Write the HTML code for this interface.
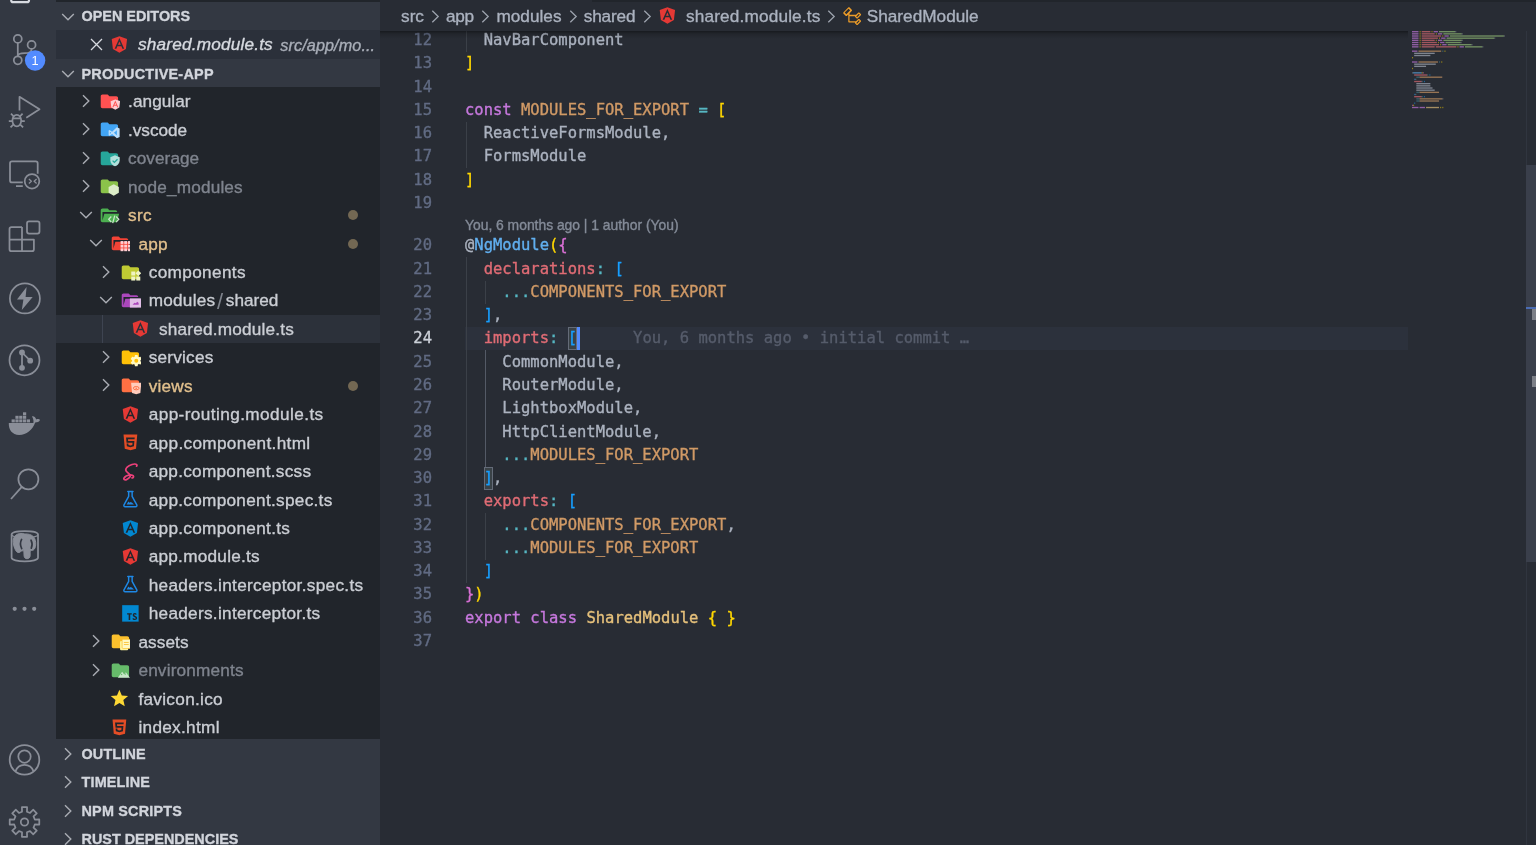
<!DOCTYPE html>
<html lang="en"><head><meta charset="utf-8"><title>shared.module.ts - productive-app</title>
<style>
*{box-sizing:border-box;margin:0;padding:0}
html,body{width:1536px;height:845px;overflow:hidden;background:#282c34}
body{position:relative;will-change:transform;-webkit-text-stroke:.35px;font-family:"Liberation Sans",sans-serif;color:#ccd0d8}
.abs{position:absolute}
.activity{position:absolute;left:0;top:0;width:56px;height:845px;background:#333842}
.activity svg{position:absolute;overflow:visible}
.sidebar{position:absolute;left:56px;top:0;width:324px;height:845px;background:#21252b;overflow:hidden}
.hdr{position:absolute;left:0;width:324px;height:28.45px;background:#333842}
.hdr svg{position:absolute;left:5.4px;top:8px}
.ht{position:absolute;left:25.5px;color:#d2d5dc;font-weight:bold;font-size:14.4px;line-height:28px;white-space:pre}
.row{position:absolute;left:0;width:324px;height:28.45px}
.row svg{position:absolute}
.row.sel{background:#2c313a}
.t{position:absolute;font-size:17.2px;line-height:28px;white-space:pre;color:#cbced4}
.mod{color:#e2c08d}
.ign{color:#7f848e}
.dot{position:absolute;left:291.5px;top:9.2px;width:10px;height:10px;border-radius:50%;background:#736853}
.editor{position:absolute;left:380px;top:0;width:1156px;height:845px;background:#282c34;overflow:hidden}
.crumbs{position:absolute;left:0;top:0;width:1156px;height:30.5px;background:#282c34;z-index:5}
.crumbs span{position:absolute;font-size:17.2px;line-height:28px;color:#abb2bf;white-space:pre}
.crumbs svg{position:absolute}
.ln{position:absolute;left:0;width:52px;text-align:right;font-family:"DejaVu Sans Mono","Liberation Mono",monospace;font-size:15.51px;line-height:24px;height:24px;color:#616b83;white-space:pre}
.ln.act{color:#ccd0d8}
.cl{position:absolute;left:85px;font-family:"DejaVu Sans Mono","Liberation Mono",monospace;font-size:15.51px;line-height:24px;height:24px;color:#abb2bf;white-space:pre}
.k{color:#c678dd}.c{color:#d19a66}.o{color:#56b6c2}.v{color:#e06c75}.f{color:#61afef}.y{color:#e5c07b}
.b1{color:#ffd700}.b2{color:#da70d6}.b3{color:#179fff}
.lens{position:absolute;left:85px;font-size:13.9px;line-height:20px;color:#848b98;white-space:pre}
.blame{color:#565c6b}
.g{position:absolute;width:1px;background:#3b4048}
.g.a{background:#545a66}
</style></head>
<body>
<div class="activity">
<svg width="56" height="845" viewBox="0 0 56 845" style="left:0;top:0" fill="none" stroke="#8a8e98" stroke-width="1.75" stroke-linejoin="round">
<path d="M11.200 -3V.200c0 1.100.900 2 2 2h13.800c1.100 0 2-.900 2-2V-3" stroke="#d7dae0" stroke-width="2.200"/>
<g>
<circle cx="17.800" cy="38.900" r="4"/><circle cx="31.600" cy="44.900" r="4"/><circle cx="17.800" cy="60.300" r="4"/>
<path d="M17.800 42.900V56.300M31.600 48.900c0 3.400-3.200 4.300-6.600 4.300-4.200 0-7.200.800-7.200 3.100"/>
<circle cx="35.100" cy="60.500" r="10.200" fill="#528bff" stroke="none"/>
<text x="35.100" y="64.900" text-anchor="middle" font-family="Liberation Sans, sans-serif" font-size="12.800" font-weight="normal" fill="#ffffff" stroke="none">1</text>
</g>
<g>
<path d="M19.500 110.500V96.800L39.500 109.300 26.300 117.700"/>
<ellipse cx="16.800" cy="120.600" rx="4.400" ry="5.800"/>
<path d="M12.600 118.400h8.400M13.600 116.300l-2.600-2.600M20 116.300l2.600-2.600M12.400 121h-3.600M21.200 121h3.600M13.300 124.600l-2.800 2.800M20.300 124.600l2.800 2.800"/>
</g>
<g>
<path d="M22.800 182.400H12c-1.100 0-2-.900-2-2v-17c0-1.100.900-2 2-2h23.700c1.100 0 2 .900 2 2v10.400M16 186h6.800"/>
<circle cx="32" cy="181.300" r="7.300"/>
<path d="M28.900 179l2.500 2.300-2.500 2.300M36.600 179l-2.500 2.300 2.500 2.300" stroke-width="1.300"/>
</g>
<g>
<rect x="27" y="221.400" width="12.500" height="12.200" rx="2"/>
<path d="M22 227H11.500c-1.100 0-2 .900-2 2v20.200c0 1.100.900 2 2 2h20.400c1.100 0 2-.900 2-2v-9.600H9.500M22 227v24.200"/>
</g>
<g>
<circle cx="24.900" cy="298.400" r="15"/>
<path d="M26.600 287l-9.600 12.400h6.400l-1.600 10.600 10.900-12.900h-7.100z" fill="#8a8e98" stroke="none"/>
</g>
<g>
<circle cx="24.500" cy="360.300" r="15"/>
<path d="M22 352.500v15.300M22 352.500l8.200 8.200"/>
<circle cx="22" cy="352.500" r="2.900" fill="#8a8e98" stroke="none"/><circle cx="30.200" cy="360.700" r="2.900" fill="#8a8e98" stroke="none"/><circle cx="22" cy="367.800" r="2.900" fill="#8a8e98" stroke="none"/>
</g>
<g fill="#8a8e98" stroke="none">
<path d="M8.800 423h24.600c.600-3.200-.800-5.400-1.400-6.400 1.200-.900 3.400.400 4.200 2.800 1.400-.600 3.200-.300 3.800.600-.800 1.800-2.800 2.500-4.800 2.500-2.800 7.800-8.800 12.400-15.900 12.400-7.400 0-10.700-5.300-10.500-11.900z"/>
<rect x="11.600" y="419.400" width="3.200" height="3" /><rect x="15.400" y="419.400" width="3.200" height="3"/><rect x="19.200" y="419.400" width="3.200" height="3"/><rect x="23" y="419.400" width="3.200" height="3"/><rect x="26.800" y="419.400" width="3.200" height="3"/>
<rect x="15.400" y="415.800" width="3.200" height="3"/><rect x="19.200" y="415.800" width="3.200" height="3"/><rect x="23" y="415.800" width="3.200" height="3"/>
<rect x="23" y="412.300" width="3.200" height="3"/>
</g>
<g>
<circle cx="28.400" cy="479.300" r="10"/>
<path d="M21.800 486.800L11 499"/>
</g>
<g>
<path d="M11.600 534.400c0-2 5.800-3.400 13.200-3.400s13.200 1.400 13.200 3.400v23.400c0 2-5.800 3.600-13.200 3.600s-13.200-1.600-13.200-3.600z"/>
<path d="M11.600 534.400c0 1.900 5.800 3.200 13.200 3.200s13.200-1.300 13.200-3.200" stroke-width="1.200"/>
<path fill="#8a8e98" stroke="#8a8e98" stroke-width="1" d="M24.900 534c-3.600-.900-7.400-.600-9.600 1.600-1.900 2-2.400 4.400-2 7.200.300 2.300.700 4.200 1.600 6 .800 1.700 1.700 3.500 3.200 3.700 1.400.200 2.400-.500 3.200-1.500.800.200 1.700-.200 2.400-1.200.300 2 .200 4.200.400 6.200.200 1.700 1.300 2.700 2.900 2.700 1.700 0 3-1.100 3.100-2.800.200-2-.200-4.100.200-6 .900.600 2 .700 3 .200 1.400-1 2.300-3.100 2.400-5.200.200-2.800-.300-5.800-2.100-8-2.200-2.400-5.500-3.200-8.700-2.900z"/>
<path d="M21.600 539.400c-1.400 2.600-1.300 6.400.100 9.200M31 540.200c1.200 2.200 1.400 5.400.300 8" stroke="#333842" stroke-width="1.700" stroke-linecap="round"/>
</g>
<g fill="#8a8e98" stroke="none"><circle cx="14.700" cy="608.800" r="2.100"/><circle cx="24.500" cy="608.800" r="2.100"/><circle cx="34.200" cy="608.800" r="2.100"/></g>
<g>
<circle cx="24.500" cy="759.900" r="14.800"/>
<circle cx="24.500" cy="756.600" r="6.200"/>
<path d="M15.400 771.400c1.400-4 4.800-6.600 9.100-6.600s7.700 2.600 9.100 6.600"/>
</g>
<g>
<path d="M22.03 811.69 L21.92 807.22 L27.08 807.22 L26.97 811.69 L30.04 812.96 L33.13 809.73 L36.77 813.37 L33.54 816.46 L34.81 819.53 L39.28 819.42 L39.28 824.58 L34.81 824.47 L33.54 827.54 L36.77 830.63 L33.13 834.27 L30.04 831.04 L26.97 832.31 L27.08 836.78 L21.92 836.78 L22.03 832.31 L18.96 831.04 L15.87 834.27 L12.23 830.63 L15.46 827.54 L14.19 824.47 L9.72 824.58 L9.72 819.42 L14.19 819.53 L15.46 816.46 L12.23 813.37 L15.87 809.73 L18.96 812.96Z"/>
<circle cx="24.500" cy="822" r="3.700"/>
</g>
</svg>
</div>
<div class="sidebar">
<div class="hdr" style="top:2px"><svg width="14" height="14" viewBox="0 0 14 14"><path d="M1.2 4 L7 9.8 L12.8 4" fill="none" stroke="#a9acb3" stroke-width="1.4"/></svg></div><span class="ht" style="top:2px;letter-spacing:0.009px">OPEN EDITORS</span>
<div class="row" style="top:30.4px;height:28.7px;background:#2b303a"><svg style="left:34.200px;top:8px" width="13" height="13" viewBox="0 0 13 13"><path d="M1 1l11 11M12 1L1 12" stroke="#d7dae0" stroke-width="1.300" fill="none"/></svg><svg style="left:53.3px;top:3.6px" width="20.8" height="20.8" viewBox="0 0 24 24"><path fill="#e53935" fill-rule="evenodd" d="M12 2.5l8.84 3.15-1.34 11.7L12 21.5l-7.5-4.15-1.34-11.7L12 2.5m0 2.1L6.47 17h2.06l1.11-2.78h4.7L15.45 17h2.06L12 4.6m1.62 7.9h-3.23L12 8.63l1.62 3.87z"/></svg></div><span class="t" style="top:30px;left:82px;color:#d7dae0;font-style:italic;letter-spacing:0.19px">shared.module.ts</span><span class="t" style="top:31px;left:224.3px;font-size:16.2px;color:#a9aeb8;font-style:italic;letter-spacing:0.103px">src/app/mo...</span>
<div class="hdr" style="top:59px"><svg width="14" height="14" viewBox="0 0 14 14"><path d="M1.2 4 L7 9.8 L12.8 4" fill="none" stroke="#a9acb3" stroke-width="1.4"/></svg></div><span class="ht" style="top:60px;letter-spacing:0.251px">PRODUCTIVE-APP</span>
<div class="row" style="top:87.3px"><svg style="left:22.5px;top:6.5px" width="14" height="14" viewBox="0 0 14 14"><path d="M4 1.2 L9.800 7 L4 12.800" fill="none" stroke="#a9acb3" stroke-width="1.4"/></svg><svg style="left:43.3px;top:3.5px" width="20.8" height="20.8" viewBox="0 0 24 24"><path fill="#ff5252" d="M10 4H4c-1.11 0-2 .89-2 2v12c0 1.1.9 2 2 2h16c1.1 0 2-.9 2-2V8c0-1.11-.9-2-2-2h-8l-2-2z"/><g transform="translate(0.8 0)"><g transform="translate(10.6 8.2) scale(.62)"><path fill="#ffcdd2" fill-rule="evenodd" d="M12 2.5l8.84 3.15-1.34 11.7L12 21.5l-7.5-4.15-1.34-11.7L12 2.5m0 2.1L6.47 17h2.06l1.11-2.78h4.7L15.45 17h2.06L12 4.6m1.62 7.9h-3.23L12 8.63l1.62 3.87z"/></g></g></svg></div><span class="t " style="top:87px;left:72.1px;letter-spacing:0.054px">.angular</span>
<div class="row" style="top:115.75px"><svg style="left:22.5px;top:6.5px" width="14" height="14" viewBox="0 0 14 14"><path d="M4 1.2 L9.800 7 L4 12.800" fill="none" stroke="#a9acb3" stroke-width="1.4"/></svg><svg style="left:43.3px;top:3.5px" width="20.8" height="20.8" viewBox="0 0 24 24"><path fill="#42a5f5" d="M10 4H4c-1.11 0-2 .89-2 2v12c0 1.1.9 2 2 2h16c1.1 0 2-.9 2-2V8c0-1.11-.9-2-2-2h-8l-2-2z"/><g transform="translate(0 0)"><path fill="#bbdefb" d="M20.600 9.600L23.800 11v9.900l-3.200 1.400-5.500-5.100-2.900 2.200-1.100-.6v-5.600l1.100-.6 2.900 2.200 5.500-5.200m0 3.500l-3.300 2.900 3.300 2.900v-5.800m-8 1.600v2.600l1.400-1.300-1.400-1.300z"/></g></svg></div><span class="t " style="top:116px;left:72.1px;letter-spacing:-0.056px">.vscode</span>
<div class="row" style="top:144.2px"><svg style="left:22.5px;top:6.5px" width="14" height="14" viewBox="0 0 14 14"><path d="M4 1.2 L9.800 7 L4 12.800" fill="none" stroke="#a9acb3" stroke-width="1.4"/></svg><svg style="left:43.3px;top:3.5px" width="20.8" height="20.8" viewBox="0 0 24 24"><path fill="#26a69a" d="M10 4H4c-1.11 0-2 .89-2 2v12c0 1.1.9 2 2 2h16c1.1 0 2-.9 2-2V8c0-1.11-.9-2-2-2h-8l-2-2z"/><g transform="translate(0 0)"><path fill="#b2dfdb" d="M18.500 8.300l5.400 2.300v3.500c0 3.200-2.300 6.100-5.400 6.900-3.100-.800-5.400-3.700-5.400-6.900v-3.500l5.400-2.300z"/><path fill="none" stroke="#26a69a" stroke-width="1.500" d="M15.700 14.600l2 2 3.700-3.700"/></g></svg></div><span class="t ign" style="top:144px;left:72.1px;letter-spacing:0.054px">coverage</span>
<div class="row" style="top:172.65px"><svg style="left:22.5px;top:6.5px" width="14" height="14" viewBox="0 0 14 14"><path d="M4 1.2 L9.800 7 L4 12.800" fill="none" stroke="#a9acb3" stroke-width="1.4"/></svg><svg style="left:43.3px;top:3.5px" width="20.8" height="20.8" viewBox="0 0 24 24"><path fill="#8bc34a" d="M10 4H4c-1.11 0-2 .89-2 2v12c0 1.1.9 2 2 2h16c1.1 0 2-.9 2-2V8c0-1.11-.9-2-2-2h-8l-2-2z"/><g transform="translate(0 0)"><path fill="#dcedc8" d="M17 9.400l5.900 3.300v6.700L17 22.700l-5.900-3.300v-6.700L17 9.400z"/></g></svg></div><span class="t ign" style="top:173px;left:72.1px;letter-spacing:0.167px">node_modules</span>
<div class="row" style="top:201.1px"><svg style="left:22.5px;top:6.5px" width="14" height="14" viewBox="0 0 14 14"><path d="M1.2 4 L7 9.8 L12.8 4" fill="none" stroke="#a9acb3" stroke-width="1.4"/></svg><svg style="left:43.3px;top:3.5px" width="20.8" height="20.8" viewBox="0 0 24 24"><path fill="#4caf50" d="M19 20H4c-1.11 0-2-.9-2-2V6c0-1.11.89-2 2-2h6l2 2h7c1.1 0 2 .9 2 2H4v10l2.14-8h17.07l-2.28 8.5c-.23.87-1.01 1.5-1.93 1.5z"/><g transform="translate(0 0)"><path fill="none" stroke="#c8e6c9" stroke-width="1.500" d="M14.200 13.200l-3 3.300 3 3.300M19.800 13.200l3 3.300-3 3.300M18.200 12.200l-2.400 8.800"/></g></svg><i class="dot"></i></div><span class="t mod" style="top:201px;left:72.1px;letter-spacing:0.289px">src</span>
<div class="row" style="top:229.55px"><svg style="left:32.8px;top:6.5px" width="14" height="14" viewBox="0 0 14 14"><path d="M1.2 4 L7 9.8 L12.8 4" fill="none" stroke="#a9acb3" stroke-width="1.4"/></svg><svg style="left:53.6px;top:3.5px" width="20.8" height="20.8" viewBox="0 0 24 24"><path fill="#f44336" d="M19 20H4c-1.11 0-2-.9-2-2V6c0-1.11.89-2 2-2h6l2 2h7c1.1 0 2 .9 2 2H4v10l2.14-8h17.07l-2.28 8.5c-.23.87-1.01 1.5-1.93 1.5z"/><g transform="translate(1.4 -0.3)"><g fill="#ffcdd2"><rect x="10.800" y="9.600" width="3.300" height="3.300"/><rect x="15" y="9.600" width="3.300" height="3.300"/><rect x="19.200" y="9.600" width="3.300" height="3.300"/><rect x="10.800" y="13.800" width="3.300" height="3.300"/><rect x="15" y="13.800" width="3.300" height="3.300"/><rect x="19.200" y="13.800" width="3.300" height="3.300"/><rect x="10.800" y="18" width="3.300" height="3.300"/><rect x="15" y="18" width="3.300" height="3.300"/><rect x="19.200" y="18" width="3.300" height="3.300"/></g></g></svg><i class="dot"></i></div><span class="t mod" style="top:230px;left:82.4px;letter-spacing:0.256px">app</span>
<div class="row" style="top:258.0px"><svg style="left:43.1px;top:6.5px" width="14" height="14" viewBox="0 0 14 14"><path d="M4 1.2 L9.800 7 L4 12.800" fill="none" stroke="#a9acb3" stroke-width="1.4"/></svg><svg style="left:63.9px;top:3.5px" width="20.8" height="20.8" viewBox="0 0 24 24"><path fill="#c0ca33" d="M10 4H4c-1.11 0-2 .89-2 2v12c0 1.1.9 2 2 2h16c1.1 0 2-.9 2-2V8c0-1.11-.9-2-2-2h-8l-2-2z"/><g transform="translate(1.8 -0.5)"><g fill="#f0f4c3"><rect x="11.200" y="11.500" width="4.600" height="4.600"/><rect x="11.200" y="17.300" width="4.600" height="4.600"/><rect x="17" y="17.300" width="4.600" height="4.600"/><path d="M19.300 10.200l3.300 3.300-3.300 3.300-3.300-3.300z"/></g></g></svg></div><span class="t " style="top:258px;left:92.7px;letter-spacing:0.362px">components</span>
<div class="row" style="top:286.45px"><svg style="left:43.1px;top:6.5px" width="14" height="14" viewBox="0 0 14 14"><path d="M1.2 4 L7 9.8 L12.8 4" fill="none" stroke="#a9acb3" stroke-width="1.4"/></svg><svg style="left:63.9px;top:3.5px" width="20.8" height="20.8" viewBox="0 0 24 24"><path fill="#ab47bc" d="M19 20H4c-1.11 0-2-.9-2-2V6c0-1.11.89-2 2-2h6l2 2h7c1.1 0 2 .9 2 2H4v10l2.14-8h17.07l-2.28 8.5c-.23.87-1.01 1.5-1.93 1.5z"/><g transform="translate(1.0 -1.5)"><rect x="10.400" y="11.200" width="13" height="10.600" fill="#e1bee7"/><path fill="#ab47bc" d="M13.500 18.600h7v-2.100l-1.400-1.300-2 1.600-1.400-.6z"/></g></svg></div><span class="t" style="top:286px;left:92.7px;letter-spacing:0.239px">modules</span><span class="t" style="top:288px;left:161.0px;color:#7f848d;font-size:22px;-webkit-text-stroke:0">/</span><span class="t" style="top:286px;left:169.8px;letter-spacing:0.008px">shared</span>
<div class="row sel" style="top:314.9px"><svg style="left:73.9px;top:3.5px" width="20.8" height="20.8" viewBox="0 0 24 24"><path fill="#e53935" fill-rule="evenodd" d="M12 2.5l8.84 3.15-1.34 11.7L12 21.5l-7.5-4.15-1.34-11.7L12 2.5m0 2.1L6.47 17h2.06l1.11-2.78h4.7L15.45 17h2.06L12 4.6m1.62 7.9h-3.23L12 8.63l1.62 3.87z"/></svg></div><span class="t " style="top:315px;left:103.0px;letter-spacing:0.2px">shared.module.ts</span>
<div class="row" style="top:343.35px"><svg style="left:43.1px;top:6.5px" width="14" height="14" viewBox="0 0 14 14"><path d="M4 1.2 L9.800 7 L4 12.800" fill="none" stroke="#a9acb3" stroke-width="1.4"/></svg><svg style="left:63.9px;top:3.5px" width="20.8" height="20.8" viewBox="0 0 24 24"><path fill="#ffc107" d="M10 4H4c-1.11 0-2 .89-2 2v12c0 1.1.9 2 2 2h16c1.1 0 2-.9 2-2V8c0-1.11-.9-2-2-2h-8l-2-2z"/><g transform="translate(1.2 -0.6)"><g transform="translate(9.800 8.600) scale(.65)"><path fill="#fff9c4" d="M12 15.500A3.500 3.500 0 0 1 8.500 12 3.500 3.500 0 0 1 12 8.500a3.500 3.500 0 0 1 3.500 3.500 3.500 3.500 0 0 1-3.500 3.500m7.430-2.530c.04-.32.070-.64.070-.97 0-.33-.03-.66-.07-1l2.110-1.630c.19-.15.240-.42.120-.64l-2-3.460c-.12-.22-.39-.31-.61-.22l-2.490 1c-.52-.39-1.060-.73-1.690-.98l-.37-2.650A.506.506 0 0 0 14 2h-4c-.25 0-.46.180-.5.420l-.37 2.650c-.63.250-1.170.590-1.690.98l-2.490-1c-.22-.09-.49 0-.61.220l-2 3.460c-.13.220-.07.490.12.640L4.570 11c-.04.340-.07.670-.07 1 0 .33.030.65.070.97l-2.110 1.660c-.19.150-.25.420-.12.640l2 3.460c.12.220.39.300.61.220l2.490-1.010c.52.400 1.060.74 1.690.99l.37 2.650c.04.240.25.420.5.420h4c.25 0 .46-.18.500-.42l.37-2.650c.63-.26 1.170-.59 1.690-.99l2.490 1.010c.22.080.49 0 .61-.22l2-3.460c.12-.22.070-.49-.12-.64l-2.110-1.660z"/></g></g></svg></div><span class="t " style="top:343px;left:92.7px;letter-spacing:0.222px">services</span>
<div class="row" style="top:371.8px"><svg style="left:43.1px;top:6.5px" width="14" height="14" viewBox="0 0 14 14"><path d="M4 1.2 L9.800 7 L4 12.800" fill="none" stroke="#a9acb3" stroke-width="1.4"/></svg><svg style="left:63.9px;top:3.5px" width="20.8" height="20.8" viewBox="0 0 24 24"><path fill="#ff7043" d="M10 4H4c-1.11 0-2 .89-2 2v12c0 1.1.9 2 2 2h16c1.1 0 2-.9 2-2V8c0-1.11-.9-2-2-2h-8l-2-2z"/><g transform="translate(1.2 -0.6)"><path fill="#ffccbc" d="M11.600 9.600h11.800l-1.100 11.900-4.800 1.400-4.800-1.400z"/><ellipse cx="17.500" cy="15.800" rx="3.300" ry="1.900" fill="none" stroke="#ff7043" stroke-width="1.100"/><circle cx="17.500" cy="15.800" r=".9" fill="#ff7043"/></g></svg><i class="dot"></i></div><span class="t mod" style="top:372px;left:92.7px;letter-spacing:0.204px">views</span>
<div class="row" style="top:400.25px"><svg style="left:63.6px;top:3.5px" width="20.8" height="20.8" viewBox="0 0 24 24"><path fill="#e53935" fill-rule="evenodd" d="M12 2.5l8.84 3.15-1.34 11.7L12 21.5l-7.5-4.15-1.34-11.7L12 2.5m0 2.1L6.47 17h2.06l1.11-2.78h4.7L15.45 17h2.06L12 4.6m1.62 7.9h-3.23L12 8.63l1.62 3.87z"/></svg></div><span class="t " style="top:400px;left:92.7px;letter-spacing:0.412px">app-routing.module.ts</span>
<div class="row" style="top:428.7px"><svg style="left:63.6px;top:3.5px" width="20.8" height="20.8" viewBox="0 0 24 24"><path fill="#e44d26" fill-rule="evenodd" d="M12 17.56l4.07-1.13.55-6.1H9.38L9.2 8.3h7.6l.2-1.99H7l.56 6.01h6.89l-.23 2.58-2.22.6-2.22-.6-.14-1.66h-2l.29 3.19L12 17.56M4.07 3h15.86L18.5 19.2 12 21l-6.5-1.8L4.07 3z"/></svg></div><span class="t " style="top:429px;left:92.7px;letter-spacing:0.338px">app.component.html</span>
<div class="row" style="top:457.15px"><svg style="left:63.6px;top:3.5px" width="20.8" height="20.8" viewBox="0 0 24 24"><path transform="translate(-1.920 .490) scale(1.130 1.060)" fill="none" stroke="#ec407a" stroke-width="1.8" stroke-linecap="round" stroke-linejoin="round" d="M18.6 5.2c1.5-2-1.5-3-4.6-1.8C10.500 4.800 7.400 7.300 7.600 9.500c.2 2.100 3.300 3.200 4.300 5.100 1 2-1.300 4.300-3.600 5.200-1.900.700-3.100-.300-2.500-1.700.700-1.600 3.200-2.900 5.600-3.300 2.300-.400 4.200.300 4.100 1.800-.100 1.100-1.100 1.500-1.500 1.400"/></svg></div><span class="t " style="top:457px;left:92.7px;letter-spacing:0.273px">app.component.scss</span>
<div class="row" style="top:485.6px"><svg style="left:63.6px;top:3.5px" width="20.8" height="20.8" viewBox="0 0 24 24"><path fill="none" stroke="#1e88e5" stroke-width="1.7" stroke-linejoin="round" stroke-linecap="round" d="M9 3h6M10 3.200v5.300L4.600 18.400c-.500 1 .100 2.100 1.300 2.100h12.200c1.200 0 1.800-1.100 1.300-2.100L14 8.500V3.200"/><path fill="#1e88e5" d="M8 17.200l1.700-2.700 1.300 1.300 1.300-.8 1.700.9 1.600 1.300.4.800H7.700z"/></svg></div><span class="t " style="top:486px;left:92.7px;letter-spacing:0.294px">app.component.spec.ts</span>
<div class="row" style="top:514.05px"><svg style="left:63.6px;top:3.5px" width="20.8" height="20.8" viewBox="0 0 24 24"><path fill="#0288d1" fill-rule="evenodd" d="M12 2.5l8.84 3.15-1.34 11.7L12 21.5l-7.5-4.15-1.34-11.7L12 2.5m0 2.1L6.47 17h2.06l1.11-2.78h4.7L15.45 17h2.06L12 4.6m1.62 7.9h-3.23L12 8.63l1.62 3.87z"/></svg></div><span class="t " style="top:514px;left:92.7px;letter-spacing:0.304px">app.component.ts</span>
<div class="row" style="top:542.5px"><svg style="left:63.6px;top:3.5px" width="20.8" height="20.8" viewBox="0 0 24 24"><path fill="#e53935" fill-rule="evenodd" d="M12 2.5l8.84 3.15-1.34 11.7L12 21.5l-7.5-4.15-1.34-11.7L12 2.5m0 2.1L6.47 17h2.06l1.11-2.78h4.7L15.45 17h2.06L12 4.6m1.62 7.9h-3.23L12 8.63l1.62 3.87z"/></svg></div><span class="t " style="top:542px;left:92.7px;letter-spacing:0.253px">app.module.ts</span>
<div class="row" style="top:570.95px"><svg style="left:63.6px;top:3.5px" width="20.8" height="20.8" viewBox="0 0 24 24"><path fill="none" stroke="#1e88e5" stroke-width="1.7" stroke-linejoin="round" stroke-linecap="round" d="M9 3h6M10 3.200v5.300L4.600 18.400c-.500 1 .100 2.100 1.300 2.100h12.200c1.200 0 1.800-1.100 1.300-2.100L14 8.500V3.200"/><path fill="#1e88e5" d="M8 17.200l1.700-2.700 1.300 1.300 1.300-.8 1.700.9 1.600 1.300.4.800H7.700z"/></svg></div><span class="t " style="top:571px;left:92.7px;letter-spacing:0.309px">headers.interceptor.spec.ts</span>
<div class="row" style="top:599.4px"><svg style="left:63.6px;top:3.5px" width="20.8" height="20.8" viewBox="0 0 24 24"><path fill="#0288d1" d="M2.500 2.500h19v19h-19z"/><path fill="#21252b" d="M14.200 18.100c.5.900 1.400 1.600 2.900 1.600 1.500 0 2.700-.8 2.700-2.300 0-1.300-.8-1.900-2.100-2.500l-.4-.2c-.7-.3-1-.5-1-1 0-.4.3-.7.800-.7s.8.200 1.100.7l1.200-.8c-.5-.9-1.300-1.300-2.300-1.300-1.400 0-2.400.9-2.400 2.200 0 1.300.8 1.900 1.900 2.400l.4.200c.7.300 1.200.5 1.200 1.100 0 .5-.4.800-1.100.8-.8 0-1.300-.4-1.600-1l-1.300.8M13.600 11.700H8.200v1.500h1.800v6.400h1.800v-6.400h1.800v-1.500z"/></svg></div><span class="t " style="top:599px;left:92.7px;letter-spacing:0.295px">headers.interceptor.ts</span>
<div class="row" style="top:627.85px"><svg style="left:32.8px;top:6.5px" width="14" height="14" viewBox="0 0 14 14"><path d="M4 1.2 L9.800 7 L4 12.800" fill="none" stroke="#a9acb3" stroke-width="1.4"/></svg><svg style="left:53.6px;top:3.5px" width="20.8" height="20.8" viewBox="0 0 24 24"><path fill="#fbc02d" d="M10 4H4c-1.11 0-2 .89-2 2v12c0 1.1.9 2 2 2h16c1.1 0 2-.9 2-2V8c0-1.11-.9-2-2-2h-8l-2-2z"/><g transform="translate(0 0)"><rect x="11.600" y="11.600" width="9.400" height="10.600" rx="1.200" fill="#fff59d"/><rect x="14" y="9.600" width="9.600" height="10.600" rx="1.200" fill="#fff9c4" stroke="#fbc02d" stroke-width=".8"/><path stroke="#fbc02d" stroke-width="1" d="M16 13.200h5.600M16 15.600h5.600"/></g></svg></div><span class="t " style="top:628px;left:82.4px;letter-spacing:0.083px">assets</span>
<div class="row" style="top:656.3px"><svg style="left:32.8px;top:6.5px" width="14" height="14" viewBox="0 0 14 14"><path d="M4 1.2 L9.800 7 L4 12.800" fill="none" stroke="#a9acb3" stroke-width="1.4"/></svg><svg style="left:53.6px;top:3.5px" width="20.8" height="20.8" viewBox="0 0 24 24"><path fill="#66bb6a" d="M10 4H4c-1.11 0-2 .89-2 2v12c0 1.1.9 2 2 2h16c1.1 0 2-.9 2-2V8c0-1.11-.9-2-2-2h-8l-2-2z"/><g transform="translate(0 0)"><path fill="#c8e6c9" d="M9 20.500l5-7 2.400 3.300 1.900-2.600 4.700 6.300z"/><path fill="#66bb6a" d="M12.400 16.900l1-1.400 1 1.400-1 .6zM16.800 16.400l.9-1.200.9 1.200-.9.600z"/></g></svg></div><span class="t ign" style="top:656px;left:82.4px;letter-spacing:0.183px">environments</span>
<div class="row" style="top:684.75px"><svg style="left:53.3px;top:3.5px" width="20.8" height="20.8" viewBox="0 0 24 24"><path fill="#fdd835" d="M12 17.270L18.180 21l-1.640-7.030L22 9.240l-7.190-.61L12 2 9.190 8.630 2 9.240l5.460 4.730L5.820 21 12 17.270z"/></svg></div><span class="t " style="top:685px;left:82.4px;letter-spacing:0.308px">favicon.ico</span>
<div class="row" style="top:713.2px"><svg style="left:53.3px;top:3.5px" width="20.8" height="20.8" viewBox="0 0 24 24"><path fill="#e44d26" fill-rule="evenodd" d="M12 17.56l4.07-1.13.55-6.1H9.38L9.2 8.3h7.6l.2-1.99H7l.56 6.01h6.89l-.23 2.58-2.22.6-2.22-.6-.14-1.66h-2l.29 3.19L12 17.56M4.07 3h15.86L18.5 19.2 12 21l-6.5-1.8L4.07 3z"/></svg></div><span class="t " style="top:713px;left:82.4px;letter-spacing:0.306px">index.html</span>
<div class="g" style="left:46px;top:314.90px;height:28.45px;background:#3e4451"></div>
<div class="hdr" style="top:739.0px"><svg width="14" height="14" viewBox="0 0 14 14"><path d="M4 1.2 L9.800 7 L4 12.800" fill="none" stroke="#a9acb3" stroke-width="1.4"/></svg></div><span class="ht" style="top:740px;letter-spacing:0.157px">OUTLINE</span>
<div class="hdr" style="top:767.45px"><svg width="14" height="14" viewBox="0 0 14 14"><path d="M4 1.2 L9.800 7 L4 12.800" fill="none" stroke="#a9acb3" stroke-width="1.4"/></svg></div><span class="ht" style="top:768px;letter-spacing:0.178px">TIMELINE</span>
<div class="hdr" style="top:795.9px"><svg width="14" height="14" viewBox="0 0 14 14"><path d="M4 1.2 L9.800 7 L4 12.800" fill="none" stroke="#a9acb3" stroke-width="1.4"/></svg></div><span class="ht" style="top:797px;letter-spacing:0.194px">NPM SCRIPTS</span>
<div class="hdr" style="top:824.35px"><svg width="14" height="14" viewBox="0 0 14 14"><path d="M4 1.2 L9.800 7 L4 12.800" fill="none" stroke="#a9acb3" stroke-width="1.4"/></svg></div><span class="ht" style="top:825px;letter-spacing:0.01px">RUST DEPENDENCIES</span>
</div>
<div class="editor">
<div class="crumbs"><span style="left:21.1px;top:2px;letter-spacing:-0.061px">src</span><svg style="left:51.0px;top:9.800px" width="9" height="13" viewBox="0 0 9 13"><path d="M1.300 .700l5.900 5.800-5.900 5.800" fill="none" stroke="#9da3ae" stroke-width="1.300"/></svg><span style="left:65.9px;top:2px;letter-spacing:-0.194px">app</span><svg style="left:101.0px;top:9.800px" width="9" height="13" viewBox="0 0 9 13"><path d="M1.300 .700l5.900 5.800-5.900 5.800" fill="none" stroke="#9da3ae" stroke-width="1.300"/></svg><span style="left:116.4px;top:2px;letter-spacing:0.022px">modules</span><svg style="left:188.7px;top:9.800px" width="9" height="13" viewBox="0 0 9 13"><path d="M1.300 .700l5.900 5.800-5.900 5.800" fill="none" stroke="#9da3ae" stroke-width="1.300"/></svg><span style="left:203.7px;top:2px;letter-spacing:-0.133px">shared</span><svg style="left:262.7px;top:9.800px" width="9" height="13" viewBox="0 0 9 13"><path d="M1.300 .700l5.900 5.800-5.900 5.800" fill="none" stroke="#9da3ae" stroke-width="1.300"/></svg><svg style="left:276.79999999999995px;top:5.2px" width="20.8" height="20.8" viewBox="0 0 24 24"><path fill="#e53935" fill-rule="evenodd" d="M12 2.5l8.84 3.15-1.34 11.7L12 21.5l-7.5-4.15-1.34-11.7L12 2.5m0 2.1L6.47 17h2.06l1.11-2.78h4.7L15.45 17h2.06L12 4.6m1.62 7.9h-3.23L12 8.63l1.62 3.87z"/></svg><span style="left:306.0px;top:2px;letter-spacing:0.164px">shared.module.ts</span><svg style="left:447.4px;top:9.800px" width="9" height="13" viewBox="0 0 9 13"><path d="M1.300 .700l5.900 5.800-5.900 5.800" fill="none" stroke="#9da3ae" stroke-width="1.300"/></svg><svg style="left:461.800px;top:5.800px" width="20.700" height="20.700" viewBox="0 0 16 16"><path fill="#ee9d28" fill-rule="evenodd" d="M11.340 9.710h.710l2.670-2.670v-.710L13.380 5h-.700l-1.820 1.810h-5V5.560l1.860-1.850V3l-2-2H5L1 5v.710l2 2h.710l1.140-1.150v5.790l.500.500H10v.520l1.330 1.340h.710l2.670-2.670v-.710L13.370 10h-.700l-1.860 1.850h-5v-4H10v.480l1.340 1.380zm1.690-3.650l.630.630-2 2-.630-.630 2-2zm-8-4l1.330 1.290-3 3-1.300-1.330 2.970-2.960zm8 9l.630.630-2 2-.630-.630 2-2z"/></svg><span style="left:486.7px;top:2px;letter-spacing:0.018px">SharedModule</span></div>
<div class="abs" style="left:85px;top:327.12px;width:943px;height:23.27px;background:#2c313c"></div>
<div class="abs" style="left:187.74px;top:327.12px;width:9.34px;height:23.27px;background:#3a4247;border:1px solid #646b78"></div>
<div class="abs" style="left:103.68px;top:466.74px;width:9.34px;height:23.27px;background:#3a4247;border:1px solid #646b78"></div>
<div class="abs" style="left:197.08px;top:327.12px;width:2.5px;height:23.27px;background:#528bff"></div>
<div class="g" style="left:86px;top:28.60px;height:23.27px"></div>
<div class="g" style="left:86px;top:121.68px;height:46.54px"></div>
<div class="g" style="left:86px;top:257.31px;height:325.78px"></div>
<div class="g" style="left:105px;top:280.58px;height:23.27px"></div>
<div class="g a" style="left:105px;top:350.39px;height:116.35px"></div>
<div class="g" style="left:105px;top:513.28px;height:46.54px"></div>
<div class="ln" style="top:28px">12</div><div class="cl" style="top:28px;letter-spacing:0.002px">  NavBarComponent</div>
<div class="ln" style="top:51px">13</div><div class="cl" style="top:51px;letter-spacing:0.002px"><span class="b1">]</span></div>
<div class="ln" style="top:75px">14</div><div class="cl" style="top:75px;letter-spacing:0.002px"></div>
<div class="ln" style="top:98px">15</div><div class="cl" style="top:98px;letter-spacing:0.002px"><span class="k">const</span> <span class="c">MODULES_FOR_EXPORT</span> <span class="o">=</span> <span class="b1">[</span></div>
<div class="ln" style="top:121px">16</div><div class="cl" style="top:121px;letter-spacing:0.002px">  ReactiveFormsModule,</div>
<div class="ln" style="top:144px">17</div><div class="cl" style="top:144px;letter-spacing:0.002px">  FormsModule</div>
<div class="ln" style="top:168px">18</div><div class="cl" style="top:168px;letter-spacing:0.002px"><span class="b1">]</span></div>
<div class="ln" style="top:191px">19</div><div class="cl" style="top:191px;letter-spacing:0.002px"></div>
<div class="ln" style="top:233px">20</div><div class="cl" style="top:233px;letter-spacing:0.002px">@<span class="f">NgModule</span><span class="b1">(</span><span class="b2">{</span></div>
<div class="ln" style="top:257px">21</div><div class="cl" style="top:257px;letter-spacing:0.002px">  <span class="v">declarations</span><span class="o">:</span> <span class="b3">[</span></div>
<div class="ln" style="top:280px">22</div><div class="cl" style="top:280px;letter-spacing:0.002px">    <span class="o">...</span><span class="c">COMPONENTS_FOR_EXPORT</span></div>
<div class="ln" style="top:303px">23</div><div class="cl" style="top:303px;letter-spacing:0.002px">  <span class="b3">]</span>,</div>
<div class="ln act" style="top:326px">24</div><div class="cl" style="top:326px;letter-spacing:0.002px">  <span class="v">imports</span><span class="o">:</span> <span class="b3">[</span>      <span class="blame">You, 6 months ago • initial commit …</span></div>
<div class="ln" style="top:350px">25</div><div class="cl" style="top:350px;letter-spacing:0.002px">    CommonModule,</div>
<div class="ln" style="top:373px">26</div><div class="cl" style="top:373px;letter-spacing:0.002px">    RouterModule,</div>
<div class="ln" style="top:396px">27</div><div class="cl" style="top:396px;letter-spacing:0.002px">    LightboxModule,</div>
<div class="ln" style="top:420px">28</div><div class="cl" style="top:420px;letter-spacing:0.002px">    HttpClientModule,</div>
<div class="ln" style="top:443px">29</div><div class="cl" style="top:443px;letter-spacing:0.002px">    <span class="o">...</span><span class="c">MODULES_FOR_EXPORT</span></div>
<div class="ln" style="top:466px">30</div><div class="cl" style="top:466px;letter-spacing:0.002px">  <span class="b3">]</span>,</div>
<div class="ln" style="top:489px">31</div><div class="cl" style="top:489px;letter-spacing:0.002px">  <span class="v">exports</span><span class="o">:</span> <span class="b3">[</span></div>
<div class="ln" style="top:513px">32</div><div class="cl" style="top:513px;letter-spacing:0.002px">    <span class="o">...</span><span class="c">COMPONENTS_FOR_EXPORT</span>,</div>
<div class="ln" style="top:536px">33</div><div class="cl" style="top:536px;letter-spacing:0.002px">    <span class="o">...</span><span class="c">MODULES_FOR_EXPORT</span></div>
<div class="ln" style="top:559px">34</div><div class="cl" style="top:559px;letter-spacing:0.002px">  <span class="b3">]</span></div>
<div class="ln" style="top:582px">35</div><div class="cl" style="top:582px;letter-spacing:0.002px"><span class="b2">}</span><span class="b1">)</span></div>
<div class="ln" style="top:606px">36</div><div class="cl" style="top:606px;letter-spacing:0.002px"><span class="k">export</span> <span class="k">class</span> <span class="y">SharedModule</span> <span class="b1">{</span> <span class="b1">}</span></div>
<div class="ln" style="top:629px">37</div><div class="cl" style="top:629px;letter-spacing:0.002px"></div>
<div class="lens" style="top:215px;letter-spacing:-0.018px">You, 6 months ago | 1 author (You)</div>
<div class="abs" style="left:0;top:30.5px;width:1028px;height:8px;background:linear-gradient(rgba(0,0,0,.42),rgba(0,0,0,.16) 35%,rgba(0,0,0,0));z-index:6"></div>
<div class="abs" style="left:212px;top:0;width:944px;height:1.6px;background:#21252b;z-index:7"></div>
<svg class="abs" style="left:1032.2px;top:30.55px" width="114" height="82" viewBox="0 0 114 82"><rect x="0.00" y="0.00" width="6.49" height="1.35" fill="#c678dd" fill-opacity="0.66"/><rect x="7.57" y="0.00" width="1.08" height="1.35" fill="#ffd700" fill-opacity="0.5"/><rect x="9.73" y="0.00" width="8.65" height="1.35" fill="#e06c75" fill-opacity="0.66"/><rect x="19.46" y="0.00" width="1.08" height="1.35" fill="#ffd700" fill-opacity="0.5"/><rect x="21.62" y="0.00" width="4.32" height="1.35" fill="#c678dd" fill-opacity="0.66"/><rect x="27.02" y="0.00" width="16.21" height="1.35" fill="#98c379" fill-opacity="0.66"/><rect x="43.24" y="0.00" width="1.08" height="1.35" fill="#abb2bf" fill-opacity="0.38"/><rect x="0.00" y="2.17" width="6.49" height="1.35" fill="#c678dd" fill-opacity="0.66"/><rect x="7.57" y="2.17" width="1.08" height="1.35" fill="#ffd700" fill-opacity="0.5"/><rect x="9.73" y="2.17" width="12.97" height="1.35" fill="#e06c75" fill-opacity="0.66"/><rect x="23.78" y="2.17" width="1.08" height="1.35" fill="#ffd700" fill-opacity="0.5"/><rect x="25.94" y="2.17" width="4.32" height="1.35" fill="#c678dd" fill-opacity="0.66"/><rect x="31.35" y="2.17" width="18.38" height="1.35" fill="#98c379" fill-opacity="0.66"/><rect x="49.73" y="2.17" width="1.08" height="1.35" fill="#abb2bf" fill-opacity="0.38"/><rect x="0.00" y="4.33" width="6.49" height="1.35" fill="#c678dd" fill-opacity="0.66"/><rect x="7.57" y="4.33" width="1.08" height="1.35" fill="#ffd700" fill-opacity="0.5"/><rect x="9.73" y="4.33" width="19.46" height="1.35" fill="#e06c75" fill-opacity="0.66"/><rect x="30.27" y="4.33" width="1.08" height="1.35" fill="#ffd700" fill-opacity="0.5"/><rect x="32.43" y="4.33" width="4.32" height="1.35" fill="#c678dd" fill-opacity="0.66"/><rect x="37.84" y="4.33" width="54.05" height="1.35" fill="#98c379" fill-opacity="0.66"/><rect x="91.88" y="4.33" width="1.08" height="1.35" fill="#abb2bf" fill-opacity="0.38"/><rect x="0.00" y="6.50" width="6.49" height="1.35" fill="#c678dd" fill-opacity="0.66"/><rect x="7.57" y="6.50" width="1.08" height="1.35" fill="#ffd700" fill-opacity="0.5"/><rect x="9.73" y="6.50" width="16.21" height="1.35" fill="#e06c75" fill-opacity="0.66"/><rect x="27.02" y="6.50" width="1.08" height="1.35" fill="#ffd700" fill-opacity="0.5"/><rect x="29.19" y="6.50" width="4.32" height="1.35" fill="#c678dd" fill-opacity="0.66"/><rect x="34.59" y="6.50" width="47.56" height="1.35" fill="#98c379" fill-opacity="0.66"/><rect x="82.16" y="6.50" width="1.08" height="1.35" fill="#abb2bf" fill-opacity="0.38"/><rect x="0.00" y="8.67" width="6.49" height="1.35" fill="#c678dd" fill-opacity="0.66"/><rect x="7.57" y="8.67" width="1.08" height="1.35" fill="#ffd700" fill-opacity="0.5"/><rect x="9.73" y="8.67" width="12.97" height="1.35" fill="#e06c75" fill-opacity="0.66"/><rect x="23.78" y="8.67" width="1.08" height="1.35" fill="#ffd700" fill-opacity="0.5"/><rect x="25.94" y="8.67" width="4.32" height="1.35" fill="#c678dd" fill-opacity="0.66"/><rect x="31.35" y="8.67" width="18.38" height="1.35" fill="#98c379" fill-opacity="0.66"/><rect x="49.73" y="8.67" width="1.08" height="1.35" fill="#abb2bf" fill-opacity="0.38"/><rect x="0.00" y="10.83" width="6.49" height="1.35" fill="#c678dd" fill-opacity="0.66"/><rect x="7.57" y="10.83" width="1.08" height="1.35" fill="#ffd700" fill-opacity="0.5"/><rect x="9.73" y="10.83" width="15.13" height="1.35" fill="#e06c75" fill-opacity="0.66"/><rect x="25.94" y="10.83" width="1.08" height="1.35" fill="#ffd700" fill-opacity="0.5"/><rect x="28.11" y="10.83" width="4.32" height="1.35" fill="#c678dd" fill-opacity="0.66"/><rect x="33.51" y="10.83" width="15.13" height="1.35" fill="#98c379" fill-opacity="0.66"/><rect x="48.64" y="10.83" width="1.08" height="1.35" fill="#abb2bf" fill-opacity="0.38"/><rect x="0.00" y="13.00" width="6.49" height="1.35" fill="#c678dd" fill-opacity="0.66"/><rect x="7.57" y="13.00" width="1.08" height="1.35" fill="#ffd700" fill-opacity="0.5"/><rect x="9.73" y="13.00" width="17.30" height="1.35" fill="#e06c75" fill-opacity="0.66"/><rect x="28.11" y="13.00" width="1.08" height="1.35" fill="#ffd700" fill-opacity="0.5"/><rect x="30.27" y="13.00" width="4.32" height="1.35" fill="#c678dd" fill-opacity="0.66"/><rect x="35.67" y="13.00" width="23.78" height="1.35" fill="#98c379" fill-opacity="0.66"/><rect x="59.45" y="13.00" width="1.08" height="1.35" fill="#abb2bf" fill-opacity="0.38"/><rect x="0.00" y="15.17" width="6.49" height="1.35" fill="#c678dd" fill-opacity="0.66"/><rect x="7.57" y="15.17" width="1.08" height="1.35" fill="#ffd700" fill-opacity="0.5"/><rect x="9.73" y="15.17" width="12.97" height="1.35" fill="#e06c75" fill-opacity="0.66"/><rect x="23.78" y="15.17" width="20.54" height="1.35" fill="#e06c75" fill-opacity="0.66"/><rect x="45.40" y="15.17" width="1.08" height="1.35" fill="#ffd700" fill-opacity="0.5"/><rect x="47.56" y="15.17" width="4.32" height="1.35" fill="#c678dd" fill-opacity="0.66"/><rect x="52.97" y="15.17" width="17.30" height="1.35" fill="#98c379" fill-opacity="0.66"/><rect x="70.27" y="15.17" width="1.08" height="1.35" fill="#abb2bf" fill-opacity="0.38"/><rect x="0.00" y="19.50" width="5.40" height="1.35" fill="#c678dd" fill-opacity="0.66"/><rect x="6.49" y="19.50" width="22.70" height="1.35" fill="#d19a66" fill-opacity="0.66"/><rect x="30.27" y="19.50" width="1.08" height="1.35" fill="#56b6c2" fill-opacity="0.38"/><rect x="32.43" y="19.50" width="1.08" height="1.35" fill="#ffd700" fill-opacity="0.5"/><rect x="2.16" y="21.67" width="20.54" height="1.35" fill="#abb2bf" fill-opacity="0.66"/><rect x="2.16" y="23.84" width="16.21" height="1.35" fill="#abb2bf" fill-opacity="0.66"/><rect x="0.00" y="26.00" width="1.08" height="1.35" fill="#ffd700" fill-opacity="0.5"/><rect x="0.00" y="30.34" width="5.40" height="1.35" fill="#c678dd" fill-opacity="0.66"/><rect x="6.49" y="30.34" width="19.46" height="1.35" fill="#d19a66" fill-opacity="0.66"/><rect x="27.02" y="30.34" width="1.08" height="1.35" fill="#56b6c2" fill-opacity="0.38"/><rect x="29.19" y="30.34" width="1.08" height="1.35" fill="#ffd700" fill-opacity="0.5"/><rect x="2.16" y="32.50" width="21.62" height="1.35" fill="#abb2bf" fill-opacity="0.66"/><rect x="2.16" y="34.67" width="11.89" height="1.35" fill="#abb2bf" fill-opacity="0.66"/><rect x="0.00" y="36.84" width="1.08" height="1.35" fill="#ffd700" fill-opacity="0.5"/><rect x="0.00" y="41.17" width="1.08" height="1.35" fill="#abb2bf" fill-opacity="0.38"/><rect x="1.08" y="41.17" width="8.65" height="1.35" fill="#61afef" fill-opacity="0.66"/><rect x="9.73" y="41.17" width="1.08" height="1.35" fill="#ffd700" fill-opacity="0.5"/><rect x="10.81" y="41.17" width="1.08" height="1.35" fill="#da70d6" fill-opacity="0.5"/><rect x="2.16" y="43.34" width="12.97" height="1.35" fill="#e06c75" fill-opacity="0.66"/><rect x="15.13" y="43.34" width="1.08" height="1.35" fill="#56b6c2" fill-opacity="0.38"/><rect x="17.30" y="43.34" width="1.08" height="1.35" fill="#179fff" fill-opacity="0.5"/><rect x="4.32" y="45.51" width="3.24" height="1.35" fill="#56b6c2" fill-opacity="0.38"/><rect x="7.57" y="45.51" width="22.70" height="1.35" fill="#d19a66" fill-opacity="0.66"/><rect x="2.16" y="47.67" width="1.08" height="1.35" fill="#179fff" fill-opacity="0.5"/><rect x="3.24" y="47.67" width="1.08" height="1.35" fill="#abb2bf" fill-opacity="0.38"/><rect x="2.16" y="49.84" width="7.57" height="1.35" fill="#e06c75" fill-opacity="0.66"/><rect x="9.73" y="49.84" width="1.08" height="1.35" fill="#56b6c2" fill-opacity="0.38"/><rect x="11.89" y="49.84" width="1.08" height="1.35" fill="#179fff" fill-opacity="0.5"/><rect x="4.32" y="52.01" width="14.05" height="1.35" fill="#abb2bf" fill-opacity="0.66"/><rect x="4.32" y="54.17" width="14.05" height="1.35" fill="#abb2bf" fill-opacity="0.66"/><rect x="4.32" y="56.34" width="16.21" height="1.35" fill="#abb2bf" fill-opacity="0.66"/><rect x="4.32" y="58.51" width="18.38" height="1.35" fill="#abb2bf" fill-opacity="0.66"/><rect x="4.32" y="60.68" width="3.24" height="1.35" fill="#56b6c2" fill-opacity="0.38"/><rect x="7.57" y="60.68" width="19.46" height="1.35" fill="#d19a66" fill-opacity="0.66"/><rect x="2.16" y="62.84" width="1.08" height="1.35" fill="#179fff" fill-opacity="0.5"/><rect x="3.24" y="62.84" width="1.08" height="1.35" fill="#abb2bf" fill-opacity="0.38"/><rect x="2.16" y="65.01" width="7.57" height="1.35" fill="#e06c75" fill-opacity="0.66"/><rect x="9.73" y="65.01" width="1.08" height="1.35" fill="#56b6c2" fill-opacity="0.38"/><rect x="11.89" y="65.01" width="1.08" height="1.35" fill="#179fff" fill-opacity="0.5"/><rect x="4.32" y="67.18" width="3.24" height="1.35" fill="#56b6c2" fill-opacity="0.38"/><rect x="7.57" y="67.18" width="22.70" height="1.35" fill="#d19a66" fill-opacity="0.66"/><rect x="30.27" y="67.18" width="1.08" height="1.35" fill="#abb2bf" fill-opacity="0.38"/><rect x="4.32" y="69.34" width="3.24" height="1.35" fill="#56b6c2" fill-opacity="0.38"/><rect x="7.57" y="69.34" width="19.46" height="1.35" fill="#d19a66" fill-opacity="0.66"/><rect x="2.16" y="71.51" width="1.08" height="1.35" fill="#179fff" fill-opacity="0.5"/><rect x="0.00" y="73.68" width="1.08" height="1.35" fill="#da70d6" fill-opacity="0.5"/><rect x="1.08" y="73.68" width="1.08" height="1.35" fill="#ffd700" fill-opacity="0.5"/><rect x="0.00" y="75.84" width="6.49" height="1.35" fill="#c678dd" fill-opacity="0.66"/><rect x="7.57" y="75.84" width="5.40" height="1.35" fill="#c678dd" fill-opacity="0.66"/><rect x="14.05" y="75.84" width="12.97" height="1.35" fill="#e5c07b" fill-opacity="0.66"/><rect x="28.11" y="75.84" width="1.08" height="1.35" fill="#ffd700" fill-opacity="0.5"/><rect x="30.27" y="75.84" width="1.08" height="1.35" fill="#ffd700" fill-opacity="0.5"/></svg>
<div class="abs" style="left:1146px;top:31px;width:1px;height:814px;background:#30353f"></div>
<div class="abs" style="left:1146px;top:165px;width:10px;height:397px;background:#3a3f4b"></div>
<div class="abs" style="left:1146px;top:307.2px;width:10px;height:1.6px;background:#4a6cb3"></div>
<div class="abs" style="left:1152px;top:309.4px;width:4px;height:10.2px;background:#7c7f87"></div>
<div class="abs" style="left:1152px;top:376.4px;width:4px;height:10.6px;background:#7c7f87"></div>

</div>
</body></html>
